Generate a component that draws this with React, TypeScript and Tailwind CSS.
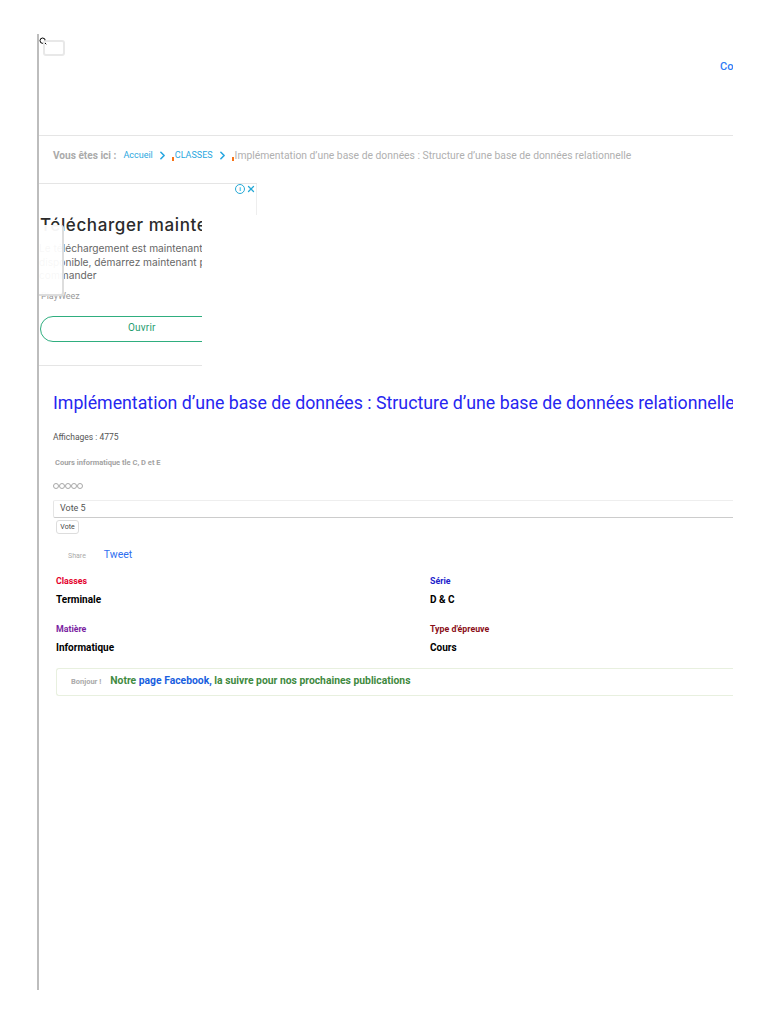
import React from 'react';
import { ChevronRight, Search, X } from 'lucide-react';

const Crumb = ({ label, marker }: { label: string; marker?: boolean }) => (
  <span className="flex items-center">
    {marker && <span className="mt-[5px] mr-px h-[4px] w-[2px] bg-[#f97316]" />}
    <span className="text-[9px] text-[#2aa7e0]">{label}</span>
    <ChevronRight className="-mt-[2px] ml-[3px] h-[13px] w-[13px] text-[#2aa7e0]" strokeWidth={3} />
  </span>
);

const Info = ({ label, value, color }: { label: string; value: string; color: string }) => (
  <div className="h-[48px]">
    <div className={`text-[8.8px] leading-[12px] font-bold ${color}`}>{label}</div>
    <div className="mt-[7px] text-[10px] leading-[12px] font-bold text-black">{value}</div>
  </div>
);

const App: React.FC = () => {
  return (
    <div className="h-[1024px] w-[768px] overflow-hidden bg-white pt-[34px] pl-[37px] font-['Roboto',sans-serif]">
      <div className="relative h-[956px] w-[696px] overflow-hidden border-l-2 border-[#bdbdbd]">
        {/* Header */}
        <div className="flex h-[102px] justify-between border-b border-[#e5e5e5]">
          <div className="flex items-start">
            <Search className="mt-[3px] h-[8px] w-[8px] shrink-0 text-black" strokeWidth={3} />
            <div className="mt-[6px] -ml-[4px] h-[16px] w-[22px] rounded-[3px] border-2 border-[#e8e8e8]" />
          </div>
          <span className="mt-[26px] w-[13px] overflow-hidden text-[11px] leading-[14px] font-medium text-[#2f7bf5]">
            Cours
          </span>
        </div>

        {/* Breadcrumb */}
        <div className="flex h-[47px] items-start whitespace-nowrap pt-[13px] pl-[14px]">
          <span className="mr-[7px] text-[10.1px] leading-[14px] font-bold text-[#aaaaaa]">Vous êtes ici :</span>
          <div className="flex h-[14px] items-center gap-[3px]">
            <Crumb label="Accueil" />
            <Crumb label="CLASSES" marker />
            <span className="mt-[5px] mr-px h-[4px] w-[2px] bg-[#f97316]" />
          </div>
          <span className="text-[10.34px] leading-[14px] text-[#b0b0b0]">
            Implémentation d’une base de données : Structure d’une base de données relationnelle
          </span>
        </div>

        {/* Ad */}
        <div className="relative h-[183px] w-[218px] border-t border-[#e5e5e5]">
          <div className="absolute top-0 right-0 flex h-[31px] items-start border-r border-[#eeeeee]">
            <div className="flex items-center gap-[1px] text-[#26a9d6]">
              <span className="flex h-[10px] w-[10px] items-center justify-center rounded-full border border-current text-[6px] leading-none font-bold">i</span>
              <X className="h-[10px] w-[10px]" strokeWidth={3} />
            </div>
          </div>
          <div className="h-[182px] w-[163px] overflow-hidden whitespace-nowrap border-b border-[#e5e5e5]">
            <div className="pt-[29px] pl-px text-[17px] leading-[24px] font-medium tracking-[0.6px] text-[#2b2b2b] font-['Inter',sans-serif]">Télécharger maintenant</div>
            <div className="mt-[5px] text-[10.2px] leading-[13.5px] text-[#666666] font-['Inter',sans-serif]">
              <div>Le téléchargement est maintenant</div>
              <div>disponible, démarrez maintenant pour</div>
              <div>commander</div>
            </div>
            <div className="mt-[7px] pl-[2px] text-[9px] leading-[12px] text-[#9a9a9a]">PlayWeez</div>
            <div className="mt-[14px] ml-px flex h-[26px] w-[250px] items-center rounded-[13px] border border-[#2fae7f] pb-[2px] pl-[87px] text-[10px] tracking-[0.2px] text-[#1f9d6f]">
              Ouvrir
            </div>
          </div>
          <div className="absolute top-[41px] left-0 h-[71px] w-[25px] rounded-r-[3px] border-r-2 border-b-2 border-[#dddddd] bg-white/95" />
        </div>

        {/* Title */}
        <h1 className="mt-[26px] ml-[14px] whitespace-nowrap text-[17.75px] leading-[22px] font-normal text-[#2626f0]">
          Implémentation d’une base de données : Structure d’une base de données relationnelle
        </h1>

        {/* Meta */}
        <div className="mt-[17px] ml-[14px] text-[8.5px] leading-[12px] text-[#555555]">Affichages : 4775</div>
        <div className="mt-[15px] ml-[16px] text-[7.5px] leading-[10px] font-bold text-[#a3a3a3]">Cours informatique tle C, D et E</div>

        {/* Vote */}
        <div className="mt-[15px] ml-[14px] flex gap-0 text-[#a8a8a8]">
          {[0, 1, 2, 3, 4].map((i) => (
            <span key={i} className="h-[6px] w-[6px] rounded-full border border-current" />
          ))}
        </div>
        <div className="mt-[11px] ml-[14px] flex h-[18px] items-center rounded-l-[2px] border border-r-0 border-t-[#eeeeee] border-b-[#cccccc] border-l-[#e5e5e5] pl-[6px] text-[9px] text-[#555555]">
          Vote 5
        </div>
        <div className="mt-[2px] ml-[17px] flex h-[14px] w-[23px] items-center justify-center rounded-[3px] border border-[#dddddd] text-[7px] text-[#444444]">
          Vote
        </div>

        {/* Share */}
        <div className="mt-[13px] ml-[29px] flex h-[16px] items-center">
          <span className="mt-[3px] text-[7px] text-[#aaaaaa]">Share</span>
          <span className="ml-[18px] text-[10.5px] text-[#2f6ff0]">Tweet</span>
        </div>

        {/* Details */}
        <div className="mt-[12px] ml-[17px] grid grid-cols-[374px_1fr]">
          <Info label="Classes" value="Terminale" color="text-[#e4002b]" />
          <Info label="Série" value="D & C" color="text-[#2222cc]" />
          <Info label="Matière" value="Informatique" color="text-[#7b1fa2]" />
          <Info label="Type d'épreuve" value="Cours" color="text-[#8b0f1a]" />
        </div>

        {/* Notice */}
        <div className="mt-[-3px] ml-[17px] flex h-[28px] items-center rounded-l-[3px] border border-r-0 border-[#e8f0df] pl-[14px] whitespace-nowrap">
          <span className="text-[7.5px] font-bold text-[#aaaaaa]">Bonjour !</span>
          <span className="-mt-[2px] ml-[9px] text-[10.35px] font-bold text-[#3f8a3f]">
            Notre <span className="text-[#1a5fe0]">page Facebook,</span> la suivre pour nos prochaines publications
          </span>
        </div>
      </div>
    </div>
  );
};

export default App;
